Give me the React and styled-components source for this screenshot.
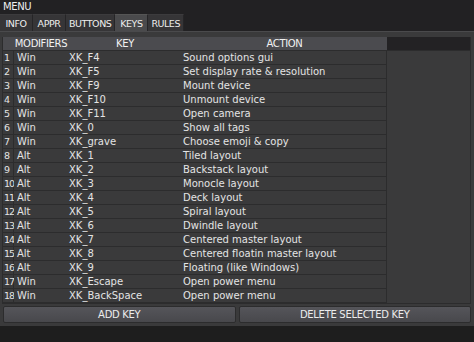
import React from "react";
import styled, { createGlobalStyle } from "styled-components";

const GlobalStyle = createGlobalStyle`
  body {
    margin: 0;
    background: #1e1e1e;
    font-family: "DejaVu Sans", "Liberation Sans", sans-serif;
    color: #e4e4e4;
  }
`;

const keys = [
  ["Win", "XK_F4", "Sound options gui"],
  ["Win", "XK_F5", "Set display rate & resolution"],
  ["Win", "XK_F9", "Mount device"],
  ["Win", "XK_F10", "Unmount device"],
  ["Win", "XK_F11", "Open camera"],
  ["Win", "XK_0", "Show all tags"],
  ["Win", "XK_grave", "Choose emoji & copy"],
  ["Alt", "XK_1", "Tiled layout"],
  ["Alt", "XK_2", "Backstack layout"],
  ["Alt", "XK_3", "Monocle layout"],
  ["Alt", "XK_4", "Deck layout"],
  ["Alt", "XK_5", "Spiral layout"],
  ["Alt", "XK_6", "Dwindle layout"],
  ["Alt", "XK_7", "Centered master layout"],
  ["Alt", "XK_8", "Centered floatin master layout"],
  ["Alt", "XK_9", "Floating (like Windows)"],
  ["Win", "XK_Escape", "Open power menu"],
  ["Win", "XK_BackSpace", "Open power menu"],
];

const tabs = ["INFO", "APPR", "BUTTONS", "KEYS", "RULES"];

const App = () => {
  return (
    <Page>
      <GlobalStyle />
      <Title>MENU</Title>
      <TabBar>
        {tabs.map((t) => (
          <Tab key={t} $active={t === "KEYS"}>{t}</Tab>
        ))}
      </TabBar>
      <Panel>
        <Table>
          <HeadCell />
          <HeadCell>MODIFIERS</HeadCell>
          <HeadCell>KEY</HeadCell>
          <HeadCell>ACTION</HeadCell>
          <HeadCell $empty />
          {keys.map(([mod, key, action], i) => (
            <React.Fragment key={i}>
              <NumCell>{i + 1}</NumCell>
              <Cell $pad={3}>{mod}</Cell>
              <Cell>{key}</Cell>
              <Cell $edge>{action}</Cell>
              <Cell $blank />
            </React.Fragment>
          ))}
        </Table>
        <Buttons>
          <Button>ADD KEY</Button>
          <Button>DELETE SELECTED KEY</Button>
        </Buttons>
      </Panel>
    </Page>
  );
};

const Page = styled.div`
  width: 474px;
  height: 342px;
  display: flex;
  flex-direction: column;
  background: #1e1e1e;
  font-size: 10px;
`;

const Title = styled.div`
  height: 14px;
  line-height: 14px;
  padding-left: 3px;
  background: #222123;
  color: #eeeeee;
  letter-spacing: -0.4px;
`;

const TabBar = styled.div`
  display: flex;
  height: 17px;
  background: #222123;
`;

const Tab = styled.div`
  min-width: 33px;
  padding: 0 3px;
  box-sizing: border-box;
  text-align: center;
  line-height: 17px;
  font-size: 9.5px;
  letter-spacing: -0.45px;
  background: ${(p) => (p.$active ? "#4a4a4c" : "#363537")};
  border-right: 1px solid #262527;
  border-top: 1px solid ${(p) => (p.$active ? "#555" : "#3c3b3d")};
  color: #ededed;
`;

const Panel = styled.div`
  display: flex;
  flex-direction: column;
  gap: 2px;
  height: 295px;
  padding: 5px 3px 3px 2px;
  background: #3a3a3b;
  border-top: 1px solid #4a4a4c;
  box-sizing: border-box;
`;

const Table = styled.div`
  display: grid;
  grid-template-columns: 11px 54px 114px 205px 1fr;
  grid-auto-rows: 14px;
  border: 1px solid #2c2c2d;
  border-top: none;
`;

const HeadCell = styled.div`
  background: ${(p) => (p.$empty ? "#232224" : "#4b4b4f")};
  border-bottom: 1px solid #2c2c2d;
  color: #f2f2f2;
  text-align: center;
  line-height: 13px;
  letter-spacing: -0.35px;
  white-space: nowrap;
`;

const Cell = styled.div`
  background: #3a3a3b;
  border-bottom: ${(p) => (p.$blank ? "none" : "1px solid #2c2c2d")};
  border-right: ${(p) => (p.$edge ? "1px solid #2c2c2d" : "none")};
  padding-left: ${(p) => p.$pad ?? 1}px;
  line-height: 13px;
  white-space: nowrap;
  overflow: hidden;
`;

const NumCell = styled.div`
  background: #3a3a3b;
  border-bottom: 1px solid #2c2c2d;
  border-right: 1px solid #2c2c2d;
  padding-left: 1px;
  font-size: 9.5px;
  letter-spacing: -1px;
  line-height: 13px;
  white-space: nowrap;
`;

const Buttons = styled.div`
  display: flex;
  gap: 3px;
  padding-left: 1px;
`;

const Button = styled.button`
  flex: 1;
  height: 17px;
  padding: 0;
  background: linear-gradient(#55555a, #48484c);
  border: 1px solid #2c2c2d;
  border-radius: 2px;
  color: #ececec;
  font: inherit;
  font-size: 10px;
  letter-spacing: -0.3px;
`;

export default App;
